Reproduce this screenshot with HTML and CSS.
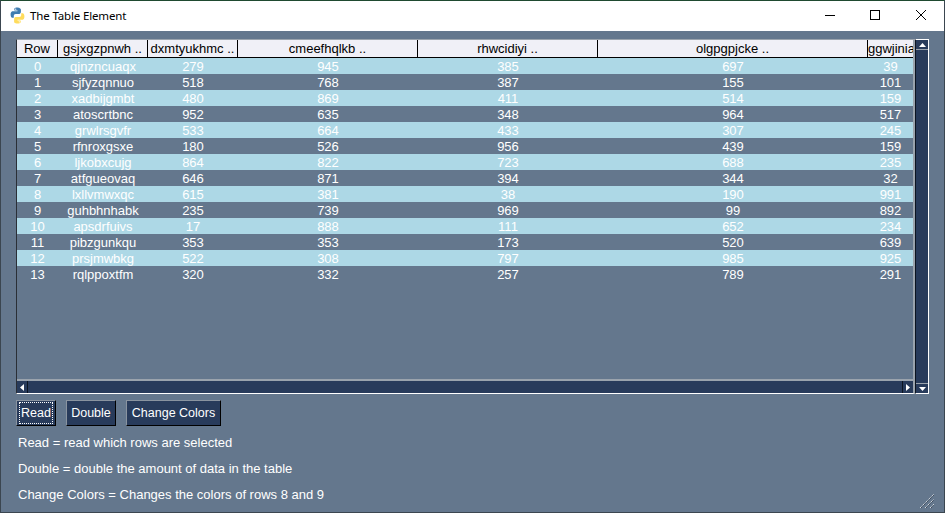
FILE: index.html
```html
<!DOCTYPE html>
<html lang="en">
<head>
<meta charset="utf-8">
<title>The Table Element</title>
<link rel="stylesheet" href="styles.css">
</head>
<body>
<div class="window">
  <header class="titlebar">
    <svg class="logo" viewBox="0 0 16 16" width="17" height="17">
      <path fill="#3f7cb0" d="M7.9.5C4.800.5 5 1.900 5 1.900v1.500h3v.5H3.600S1.500 3.700 1.500 7s1.800 3.100 1.800 3.100h1.200V8.500s-.1-1.900 1.900-1.900h3s1.800 0 1.800-1.800V2.300S10.500.5 7.900.5zM6.300 1.500a.6.6 0 1 1 0 1.200.6.6 0 0 1 0-1.200z"/>
      <path fill="#ffdc5c" d="M8.100 15.500c3.100 0 2.900-1.400 2.900-1.400v-1.500H8v-.5h4.400s2.100.2 2.100-3.100-1.800-3.100-1.800-3.100h-1.200v1.600s.1 1.900-1.900 1.900h-3s-1.800 0-1.800 1.800v2.500s-.3 1.800 2.300 1.800zm1.600-1a.6.6 0 1 1 0-1.200.6.6 0 0 1 0 1.200z"/>
    </svg>
    <span class="title">The Table Element</span>
    <div class="controls">
      <svg class="ctl" viewBox="0 0 46 30" width="46" height="30"><path d="M19 14.500h10" stroke="#000" fill="none"/></svg>
      <svg class="ctl" viewBox="0 0 46 30" width="46" height="30"><rect x="18.500" y="9.500" width="9" height="9" stroke="#000" fill="none"/></svg>
      <svg class="ctl" viewBox="0 0 46 30" width="46" height="30"><path d="M18 9l10 10M28 9L18 19" stroke="#000" fill="none"/></svg>
    </div>
  </header>
  <main class="content">
    <section class="tablebox">
      <div class="tablearea">
        <div class="tablepane">
          <div class="row head">
            <div class="cell">Row</div><div class="cell">gsjxgzpnwh ..</div><div class="cell">dxmtyukhmc ..</div><div class="cell">cmeefhqlkb ..</div><div class="cell">rhwcidiyi ..</div><div class="cell">olgpgpjcke ..</div><div class="cell clip">ggwjinia</div>
          </div>
          <div class="row odd"><div class="cell">0</div><div class="cell">qjnzncuaqx</div><div class="cell">279</div><div class="cell">945</div><div class="cell">385</div><div class="cell">697</div><div class="cell">39</div></div>
          <div class="row"><div class="cell">1</div><div class="cell">sjfyzqnnuo</div><div class="cell">518</div><div class="cell">768</div><div class="cell">387</div><div class="cell">155</div><div class="cell">101</div></div>
          <div class="row odd"><div class="cell">2</div><div class="cell">xadbijgmbt</div><div class="cell">480</div><div class="cell">869</div><div class="cell">411</div><div class="cell">514</div><div class="cell">159</div></div>
          <div class="row"><div class="cell">3</div><div class="cell">atoscrtbnc</div><div class="cell">952</div><div class="cell">635</div><div class="cell">348</div><div class="cell">964</div><div class="cell">517</div></div>
          <div class="row odd"><div class="cell">4</div><div class="cell">grwlrsgvfr</div><div class="cell">533</div><div class="cell">664</div><div class="cell">433</div><div class="cell">307</div><div class="cell">245</div></div>
          <div class="row"><div class="cell">5</div><div class="cell">rfnroxgsxe</div><div class="cell">180</div><div class="cell">526</div><div class="cell">956</div><div class="cell">439</div><div class="cell">159</div></div>
          <div class="row odd"><div class="cell">6</div><div class="cell">ljkobxcujg</div><div class="cell">864</div><div class="cell">822</div><div class="cell">723</div><div class="cell">688</div><div class="cell">235</div></div>
          <div class="row"><div class="cell">7</div><div class="cell">atfgueovaq</div><div class="cell">646</div><div class="cell">871</div><div class="cell">394</div><div class="cell">344</div><div class="cell">32</div></div>
          <div class="row odd"><div class="cell">8</div><div class="cell">lxllvmwxqc</div><div class="cell">615</div><div class="cell">381</div><div class="cell">38</div><div class="cell">190</div><div class="cell">991</div></div>
          <div class="row"><div class="cell">9</div><div class="cell">guhbhnhabk</div><div class="cell">235</div><div class="cell">739</div><div class="cell">969</div><div class="cell">99</div><div class="cell">892</div></div>
          <div class="row odd"><div class="cell">10</div><div class="cell">apsdrfuivs</div><div class="cell">17</div><div class="cell">888</div><div class="cell">111</div><div class="cell">652</div><div class="cell">234</div></div>
          <div class="row"><div class="cell">11</div><div class="cell">pibzgunkqu</div><div class="cell">353</div><div class="cell">353</div><div class="cell">173</div><div class="cell">520</div><div class="cell">639</div></div>
          <div class="row odd"><div class="cell">12</div><div class="cell">prsjmwbkg</div><div class="cell">522</div><div class="cell">308</div><div class="cell">797</div><div class="cell">985</div><div class="cell">925</div></div>
          <div class="row"><div class="cell">13</div><div class="cell">rqlppoxtfm</div><div class="cell">320</div><div class="cell">332</div><div class="cell">257</div><div class="cell">789</div><div class="cell">291</div></div>
        </div>
        <div class="hscroll">
          <div class="sbtn hbtn"><svg viewBox="0 0 4 7" width="4" height="7"><path d="M4 0v7L0 3.500z" fill="#fff"/></svg></div>
          <div class="htrack"></div>
          <div class="sbtn hbtn"><svg viewBox="0 0 4 7" width="4" height="7"><path d="M0 0v7l4-3.500z" fill="#fff"/></svg></div>
        </div>
      </div>
      <div class="vscroll">
        <div class="sbtn vbtn"><svg viewBox="0 0 7 4" width="7" height="4"><path d="M0 4h7L3.500 0z" fill="#fff"/></svg></div>
        <div class="vtrack"></div>
        <div class="sbtn vbtn"><svg viewBox="0 0 7 4" width="7" height="4"><path d="M0 0h7L3.500 4z" fill="#fff"/></svg></div>
      </div>
    </section>
    <div class="buttons">
      <button class="btn btn-read"><span>Read</span></button>
      <button class="btn btn-double"><span>Double</span></button>
      <button class="btn btn-change"><span>Change Colors</span></button>
    </div>
    <p class="note">Read = read which rows are selected</p>
    <p class="note">Double = double the amount of data in the table</p>
    <p class="note">Change Colors = Changes the colors of rows 8 and 9</p>
  </main>
  <svg class="grip" viewBox="0 0 14 14" width="14" height="14">
    <path d="M0 14L14 0M5 14L14 5M10 14l4-4" stroke="#d5dae0" fill="none" stroke-dasharray="1.400 .7"/>
    <path d="M1 14L14 1M6 14l8-8M11 14l3-3" stroke="#3d4a5a" fill="none" stroke-dasharray="1.400 .7"/>
  </svg>
</div>
</body>
</html>
```
FILE: styles.css
```css
* { box-sizing: border-box; }
html, body { margin: 0; padding: 0; height: 100%; overflow: hidden; background: #3a4a3a; }
body { font-family: "Liberation Sans", Arial, sans-serif; font-size: 13px; }
.window {
  position: relative;
  width: 945px; height: 513px;
  border: 1px solid #3b4650;
  border-top-color: #1f4a30;
  background: #64778d;
  display: flex; flex-direction: column;
}
.titlebar {
  height: 30px; flex: none; background: #fff; color: #000;
  display: flex; align-items: center; padding-left: 8px;
}
.logo { flex: none; margin-bottom: 1px; }
.title { margin-left: 4px; margin-bottom: 1px; font-family: "Noto Sans", "Liberation Sans", sans-serif; font-size: 11.5px; letter-spacing: -.15px; }
.controls { margin-left: auto; display: flex; height: 30px; }
.ctl { display: block; }
.content { flex: 1; padding: 8px 0 0 15px; color: #fff; }
.tablebox { display: flex; width: 913px; height: 355px; }
.tablearea {
  width: 899px; display: flex; flex-direction: column;
  border-top: 1px solid #9aa3ad;
  border-left: 1px solid #2a2f36;
  border-right: 2px solid #9aa3ad;
  border-bottom: 1px solid #fff;
}
.tablepane {
  flex: 1;
  border-bottom: 2px solid #9aa3ad;
  overflow: hidden;
}
.row {
  display: grid;
  grid-template-columns: 41px 90px 90px 180px 180px 270px 45px;
  height: 16px; line-height: 17px; font-size: 13px;
  text-align: center; color: #fff;
}
.row.odd { background: #add8e6; }
.row.head { height: 18px; background: #f0f0f7; color: #000; }
.head .cell { border-right: 1px solid #000; border-bottom: 1px solid #000; line-height: 18px; overflow: hidden; white-space: nowrap; }
.head .cell:last-child { border-right: 0; }
.clip { text-align: left; }
.hscroll { height: 12px; flex: none; display: flex; background: #283b5b; }
.htrack { flex: 1; }
.sbtn { background: #283b5b; display: flex; align-items: center; justify-content: center; flex: none; }
.hbtn { width: 11px; border-right: 1px solid #0c1420; }
.hbtn:last-child { border-right: 0; border-left: 1px solid #0c1420; }
.vscroll {
  width: 14px; flex: none; display: flex; flex-direction: column;
  border-top: 1px solid #fff; border-right: 1px solid #fff; border-bottom: 1px solid #fff;
  border-left: 1px solid #0c1420;
  background: #283b5b;
}
.vbtn { height: 10px; border-bottom: 1px solid #9aa3ad; }
.vbtn:last-child { border-bottom: 0; border-top: 1px solid #9aa3ad; }
.vtrack { flex: 1; }
.buttons { display: flex; gap: 10px; margin-top: 6px; }
.btn {
  height: 26px; padding: 0;
  font: inherit; font-size: 12.5px; color: #fff;
  background: #283b5b;
  border: 1px solid #000; border-top-color: #8a94a0; border-left-color: #8a94a0;
  display: flex; align-items: center; justify-content: center;
}
.btn span { display: block; padding: 0 1px; line-height: 20px; }
.btn-read { width: 40px; }
.btn-read span { outline: 1px dotted #fff; }
.btn-double { width: 50px; }
.btn-change { width: 95px; }
.note { margin: 0; padding-left: 2px; height: 26px; line-height: 18px; font-size: 13px; color: #fff; }
.note:first-of-type { margin-top: 8px; }
.grip { position: absolute; right: 10px; bottom: 4px; }
```
